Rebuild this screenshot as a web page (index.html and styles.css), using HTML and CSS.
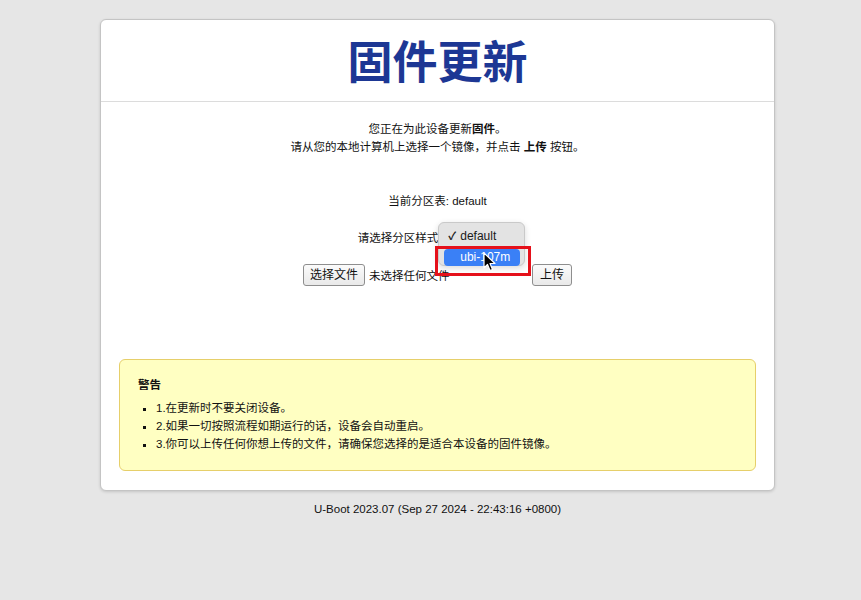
FILE: index.html
```html
<!DOCTYPE html>
<html lang="zh-CN">
<head>
<meta charset="utf-8">
<title>固件更新</title>
<link rel="stylesheet" href="styles.css">
</head>
<body>
<div class="card">
  <div class="header"><h1 class="title">固件更新</h1></div>
  <div class="content">
    <div class="intro">
      <p>您正在为此设备更新<b>固件</b>。</p>
      <p>请从您的本地计算机上选择一个镜像，并点击 <b>上传</b> 按钮。</p>
    </div>
    <p class="current">当前分区表: default</p>
    <div class="select-row">
      <span class="label">请选择分区样式</span>
      <span class="select-wrap">
        <span class="select-closed"></span>
        <span class="popup">
          <span class="opt"><span class="check">✓</span>default</span>
          <span class="opt sel">ubi-107m</span>
        </span>
        <span class="mark"></span>
        <svg class="cursor" width="14" height="20" viewBox="0 0 14 20"><path d="M1 1 L1 16 L4.5 12.5 L7 18.5 L9.5 17.5 L7 11.5 L12 11.5 Z" fill="#000" stroke="#fff" stroke-width="1.2" stroke-linejoin="round"/></svg>
      </span>
    </div>
    <div class="file-row">
      <span class="file"><span class="btn">选择文件</span><span class="none">未选择任何文件</span></span>
      <span class="btn up">上传</span>
    </div>
    <div class="warning">
      <div class="wtitle">警告</div>
      <ul>
        <li>1.在更新时不要关闭设备。</li>
        <li>2.如果一切按照流程如期运行的话，设备会自动重启。</li>
        <li>3.你可以上传任何你想上传的文件，请确保您选择的是适合本设备的固件镜像。</li>
      </ul>
    </div>
  </div>
</div>
<div class="footer">U-Boot 2023.07 (Sep 27 2024 - 22:43:16 +0800)</div>
</body>
</html>
```

FILE: styles.css
```css
html, body { margin: 0; padding: 0; }
body {
  background: #e6e6e6;
  font-family: "Liberation Sans", Arial, "Noto Sans CJK SC", sans-serif;
  font-size: 11.5px;
  color: #111;
  height: 600px;
  overflow: hidden;
}
.card {
  margin: 19px 0 0 100px;
  width: 673px;
  background: #fff;
  border: 1px solid #c4c4c4;
  border-radius: 6px;
  box-shadow: 0 1px 3px rgba(0,0,0,0.15);
}
.header {
  height: 81px;
  border-bottom: 1px solid #dcdcdc;
  display: flex;
  align-items: center;
  justify-content: center;
}
.title {
  margin: 0;
  font-family: "Noto Sans CJK SC", sans-serif;
  font-size: 45px;
  font-weight: 700;
  color: #1d3794;
  line-height: 1;
  padding-bottom: 2px;
}
.content { padding: 18px 18px 19px; text-align: center; }
.intro p { margin: 0; line-height: 18px; }
.current { margin: 36px 0 0; line-height: 18px; }
.select-row {
  margin-top: 16px;
  height: 22px;
  display: flex;
  align-items: center;
  justify-content: center;
  gap: 0;
}
.label { margin-left: 8px; }
.select-wrap {
  position: relative;
  display: inline-block;
  width: 87px;
  height: 20px;
}
.select-closed { display: block; height: 20px; }
.popup {
  position: absolute;
  left: 0;
  top: -5px;
  width: 87px;
  height: 44px;
  box-sizing: border-box;
  background: #e3e3e3;
  border: 1px solid #c9c9c9;
  border-radius: 6px;
  box-shadow: 0 2px 6px rgba(0,0,0,0.15);
  padding: 5px 5px 0;
  text-align: left;
  font-size: 12px;
}
.opt { display: block; height: 17px; line-height: 17px; padding-left: 16px; position: relative; color: #1a1a1a; }
.check { position: absolute; left: 4px; top: 0; font-size: 11px; font-weight: 700; }
.opt.sel {
  margin-top: 4px;
  width: 76px;
  box-sizing: border-box;
  background: #3a80f6;
  color: #fff;
  border-radius: 4px;
  padding-left: 16px;
}
.mark {
  position: absolute;
  left: -3px;
  top: 19px;
  width: 90px;
  height: 24px;
  border: 3px solid #e5101a;
}
.cursor { position: absolute; left: 45px; top: 25px; }
.file-row {
  margin-top: 16px;
  height: 22px;
  display: flex;
  align-items: center;
  justify-content: center;
  gap: 4px;
}
.file { display: inline-flex; align-items: center; width: 225px; }
.btn {
  display: inline-block;
  box-sizing: border-box;
  height: 22px;
  line-height: 20px;
  padding: 0 6px;
  border: 1px solid #8e8e8e;
  border-radius: 3px;
  background: linear-gradient(#fbfbfb, #e9e9e9);
  font-size: 12px;
  color: #111;
}
.none { margin-left: 4px; }
.btn.up { padding: 0 7px; }
.warning {
  margin-top: 73px;
  background: #ffffc2;
  border: 1px solid #e6cf6a;
  border-radius: 6px;
  padding: 16px 18px 17px;
  text-align: left;
  height: 112px;
  box-sizing: border-box;
}
.wtitle { font-weight: 700; line-height: 18px; }
.warning ul { margin: 5px 0 0; padding-left: 18px; list-style: square; }
.warning li { line-height: 18px; }
.footer {
  margin: 9px 0 0 100px;
  width: 675px;
  text-align: center;
  line-height: 18px;
  color: #111;
}
```
